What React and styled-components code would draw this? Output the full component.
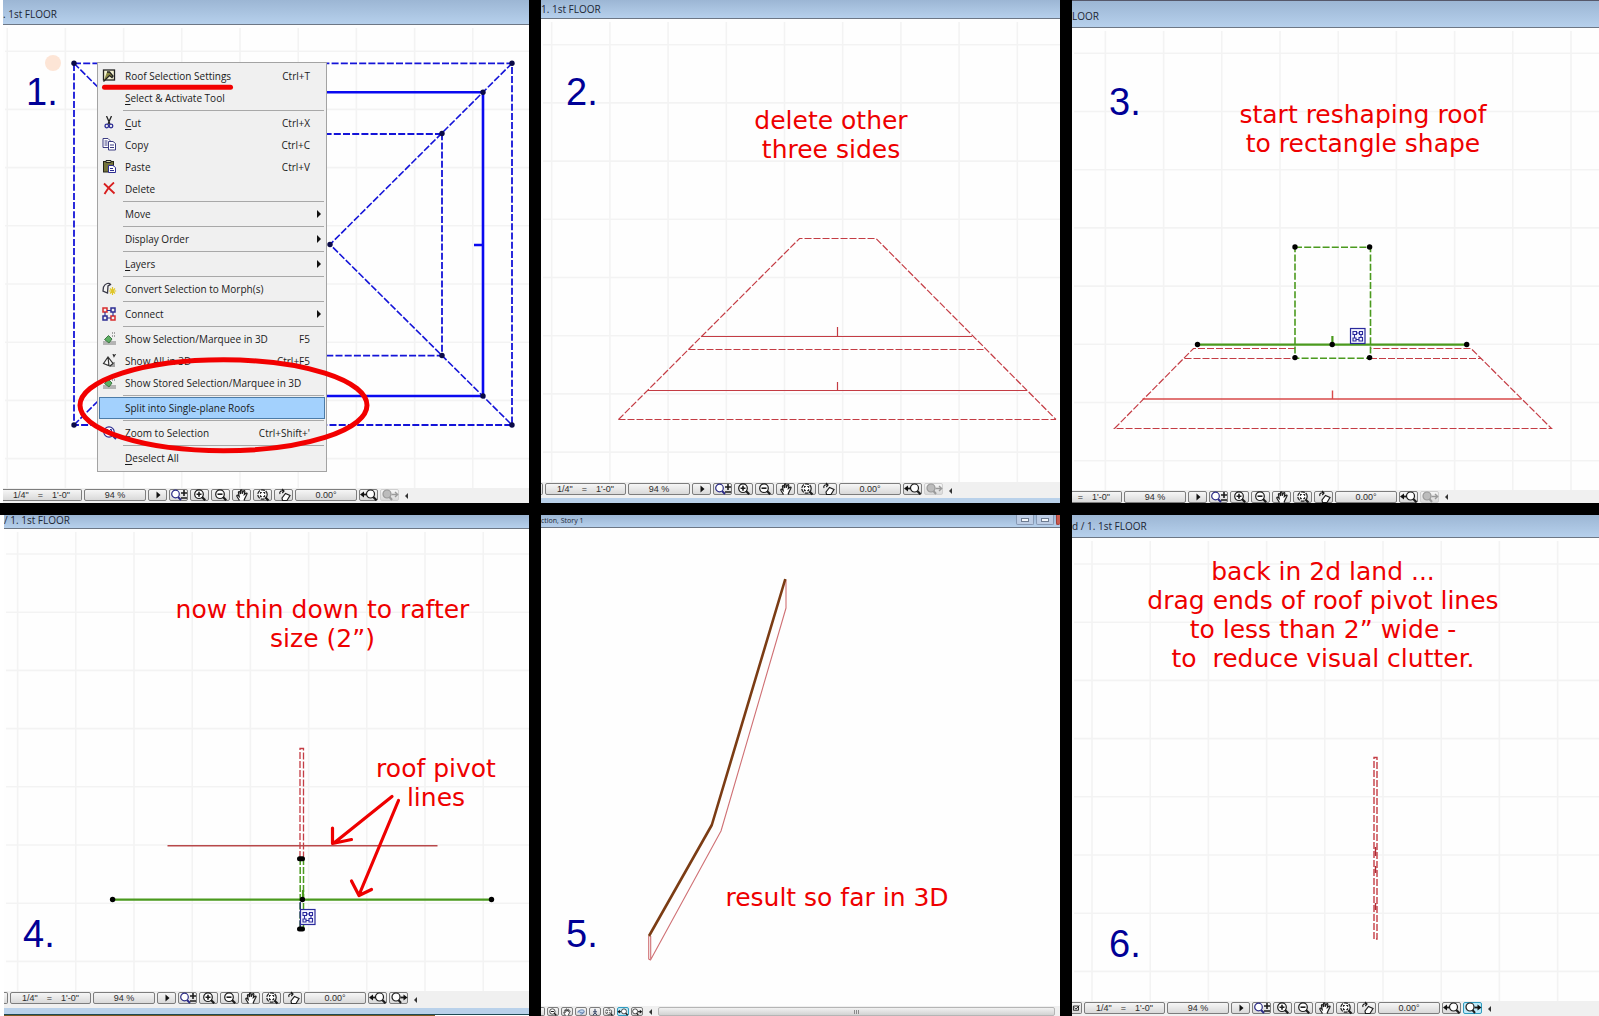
import React from 'react';
import styled, { createGlobalStyle } from 'styled-components';

const BLUE = "#1414d8";
const RED = "#c43c44";
const GREEN = "#4b9a1e";
const MARK = "#ee0000";

/* ---------- drawing helpers ---------- */

const Grid = ({ x, y, box }) => {
  const step = 58.2;
  const [left, top, width, height] = box;
  const cols = Array.from({ length: 9 }, (_, i) => x + i * step);
  const rows = Array.from({ length: 8 }, (_, i) => y + i * step);

  return (
    <g stroke="#f3f3f3" strokeWidth="1.6">
      {cols.map((cx) => <path key={`c-${cx}`} d={`M${cx} ${top + 3}V${top + height}`} />)}
      {rows.map((cy) => <path key={`r-${cy}`} d={`M${left + 2} ${cy}H${left + width}`} />)}
    </g>
  );
};

const Dots = ({ points, r = 2.7, fill = "#050510" }) => (
  <g fill={fill}>
    {points.map(([x, y]) => <circle key={`${x}-${y}`} cx={x} cy={y} r={r} />)}
  </g>
);

const PetIcon = ({ x, y }) => (
  <g transform={`translate(${x} ${y})`} fill="none" stroke="#2a2a9c">
    <rect x="0.5" y="0.5" width="14.5" height="15" fill="#f4f4ff" strokeWidth="1.2" />
    <path d="M3 3.5h3.5v3h-3.5zM9.5 3.5h3v3h-3zM3 10h3v3h-3zM9 9.5h3.500v3.500h-3.500zM6.500 5h3M4.500 6.500v3.500M11 6.500v3M6 11.500h3" strokeWidth="1.1" />
  </g>
);

/* ---------- toolbar icons ---------- */

const glyphs = {
  play: <path d="M6.500 2.500l4 3.500-4 3.500z" fill="#111" stroke="none" />,
  zoomBoth: (
    <g>
      <circle cx="4.500" cy="5" r="3.800" stroke="#2b2b86" fill="#fff" />
      <path d="M7 8l3 3" stroke="#2b2b86" strokeWidth="2" />
      <path d="M10 4h6M13 1v6M10 9h6" strokeWidth="1.600" />
    </g>
  ),
  zoomIn: (
    <g>
      <circle cx="7" cy="5.200" r="4.300" fill="#fff" />
      <path d="M10 8l3.200 3.200" strokeWidth="2.200" />
      <path d="M4.500 5.200h5M7 2.700v5" strokeWidth="1.600" />
    </g>
  ),
  zoomOut: (
    <g>
      <circle cx="7" cy="5.200" r="4.300" fill="#fff" />
      <path d="M10 8l3.200 3.200" strokeWidth="2.200" />
      <path d="M4.500 5.200h5" strokeWidth="1.600" />
    </g>
  ),
  hand: <path d="M5.500 11.500L3 7.500c-.8-1.200.6-1.800 1.300-.9L5.200 7.500 4.400 3.300c0-1 1.100-1 1.400-.2L6.500 5V1.500c.2-.9 1.300-.9 1.500 0L8.200 4.800 9.500 2c.5-.8 1.500-.3 1.300.6L10.300 5.500 12 4.200c.8-.5 1.400.3.9 1L11 9l-1 2.500" fill="#fff" />,
  fit: (
    <g>
      <circle cx="7.500" cy="5.500" r="4.700" fill="#fff" strokeDasharray="4 1" />
      <path d="M10.500 8.500l3 3" strokeWidth="2.200" />
      <path d="M5.500 4.800V3.500h1.300M8.300 3.500h1.300v1.300M9.600 6.300v1.300H8.300M6.800 7.600H5.500V6.300" strokeWidth="1.200" />
    </g>
  ),
  rotate: <path d="M4 5C3 2.500 5.500 1.200 7.500 2M6 0L8 2 6.300 4M6 9l3.500-4.500 4.500 2-3 5H6.500z" fill="#fff" />,
  prev: (
    <g>
      <path d="M1 5.500h4" strokeWidth="1.800" />
      <path d="M-1 5.500l4-3v6z" fill="#111" stroke="none" />
      <circle cx="9.500" cy="5" r="4" fill="#fff" />
      <path d="M12.300 8l3.200 3.200" strokeWidth="2.200" />
    </g>
  ),
  next: (
    <g>
      <circle cx="5" cy="5" r="4" fill="#fff" />
      <path d="M7.500 8l2.500 3" strokeWidth="2" />
      <path d="M9.500 5.500h4" strokeWidth="1.800" />
      <path d="M16.500 5.500l-4-3v6z" fill="#111" stroke="none" />
    </g>
  ),
  nextOff: (
    <g stroke="#9a9a9a">
      <circle cx="5" cy="5" r="4" fill="#bcbcbc" />
      <path d="M7.500 8l2.500 3" strokeWidth="2" />
      <path d="M9.500 5.500h6M13 3l2.700 2.500L13 8" strokeWidth="1.300" />
    </g>
  ),
  orbit: <path d="M3 7c0-4 8-6 10-3 1 3-3 6-6 5.500M4 4.500c3 3 6 3 8 2.500" stroke="#3c5f98" fill="#c7dcf2" />,
  walk: <path d="M8 1v2M8 4v3l-3 4M8 7l3 4M5 6l3-2 3 2" stroke="#26365a" strokeWidth="1.600" />,
  check: <path d="M2.500 2.500h9v7.500h-9zM4 5l3 3 6-6.500" strokeWidth="1.600" />
};

const icons = ["zoomBoth", "zoomIn", "zoomOut", "hand", "fit", "rotate"];

const ToolIcon = ({ name }) => (
  <Glyph viewBox="0 0 16 12" fill="none" stroke="#1c1c1c" strokeWidth="1.200" aria-hidden="true">
    {glyphs[name]}
  </Glyph>
);

const StatusBar = ({ height, lead, leadIcon, scaleWidth = 81, scale = ["1/4\"", "=", "1'-0\""], last = "nextOff" }) => (
  <Toolbar $height={height}>
    {lead && (
      <ToolButton $width={lead} $cut aria-label="Quick options">
        {leadIcon && <ToolIcon name={leadIcon} />}
      </ToolButton>
    )}
    <ScaleButton $width={scaleWidth} $cut={!lead}>
      {scale.map((part) => <span key={part}>{part}</span>)}
    </ScaleButton>
    <ToolButton $width={62}>94 %</ToolButton>
    <ToolButton aria-label="More"><ToolIcon name="play" /></ToolButton>
    {icons.map((name) => (
      <ToolButton key={name} aria-label={name}><ToolIcon name={name} /></ToolButton>
    ))}
    <ToolButton $width={62}>0.00°</ToolButton>
    <ToolButton aria-label="Previous zoom"><ToolIcon name="prev" /></ToolButton>
    <ToolButton aria-label="Next zoom" $faded={last === "nextOff"} $active={last === "nextActive"}>
      <ToolIcon name={last === "nextOff" ? "nextOff" : "next"} />
    </ToolButton>
    <Collapse />
  </Toolbar>
);

/* ---------- context menu ---------- */

const menuIcons = {
  settings: (
    <g>
      <rect x="1.500" y="1" width="11" height="10" fill="#f3f1d0" stroke="#222" strokeWidth="1.300" />
      <path d="M5 3l2.500 0 3.500 4-1 1.500L7.500 6.500l-6 6" stroke="#222" strokeWidth="1.300" fill="#8c8b45" />
    </g>
  ),
  cut: (
    <g>
      <path d="M4.500 0l3.500 8M9.500 0L6 8" stroke="#222" strokeWidth="1.300" />
      <circle cx="4.800" cy="10" r="1.800" stroke="#2e2e96" strokeWidth="1.300" />
      <circle cx="9" cy="10" r="1.800" stroke="#2e2e96" strokeWidth="1.300" />
    </g>
  ),
  copy: (
    <g stroke="#3c3c82" fill="#fff">
      <path d="M1 .5h5l2 2v7H1z" />
      <path d="M6.500 3.500h4.500l2.500 2v6.500h-7z" />
      <path d="M2.500 3h3M2.500 5h3M2.500 7h3M8 7h4M8 9.500h4" />
    </g>
  ),
  paste: (
    <g>
      <rect x="1.500" y="1.500" width="10" height="10.500" fill="#74733a" stroke="#26261a" />
      <path d="M4 2.500V.500h5v2z" fill="#d8d8b0" stroke="#222" />
      <path d="M6.500 5.500h4.500l2.500 2v5h-7z" fill="#fff" stroke="#2d2d92" />
      <path d="M8 8.500h3M8 10.500h4" stroke="#2d2d92" />
    </g>
  ),
  remove: <path d="M2 1.500l10.500 10M12 .500Q6 5 2.500 12" stroke="#d81e1e" strokeWidth="1.800" />,
  morph: (
    <g>
      <path d="M1 9l.5-4c2-4 5.500-4.500 7-2.500L6 4 5.500 11z" fill="#f4f4f4" stroke="#3a3a48" strokeWidth="1.300" />
      <path d="M10.500 5v8M6.800 9h7.400M8 6.500l5 5M13 6.500l-5 5" stroke="#dfc528" strokeWidth="1.200" />
    </g>
  ),
  connect: (
    <g strokeWidth="1.500">
      <path d="M1 1h4v4H1zM9 9h4v4H9z" stroke="#d82c2c" />
      <path d="M9 1h4v4H9zM1 9h4v4H1z" stroke="#2d2d92" />
      <path d="M5 3.500h4M3 5v4M11 5v4M5 11h4" stroke="#2d2d92" strokeWidth="1.100" />
    </g>
  ),
  marquee: (
    <g>
      <path d="M1 9h13v4H1z" fill="#b4b4b4" />
      <path d="M2.500 7.500l4-4 3.500 3.500-3 4z" fill="#5dae62" stroke="#3f7646" />
      <path d="M10 1h1M12 1h1M10 4h1M12 4h1" stroke="#555" strokeWidth="1.200" />
    </g>
  ),
  all: (
    <g>
      <path d="M8 8h5v5H8z" fill="#a4a4a4" />
      <path d="M1.500 9.500L6 3l5 6.500-3 2.500zM6 3l1 9M11 0l1 2.500L13.500 0" fill="#f5f5f5" stroke="#333" strokeWidth="1.200" />
    </g>
  ),
  zoom: (
    <g>
      <circle cx="7" cy="6" r="5.200" stroke="#2d2d92" strokeWidth="1.200" fill="#fff" />
      <path d="M11 10l3 3" stroke="#2d2d92" strokeWidth="2" />
      <path d="M4.500 5V3.500H6M8 3.500h1.500V5" stroke="#2d2d92" />
    </g>
  )
};

const menuItems = [
  { label: "Roof Selection Settings", keys: "Ctrl+T", icon: "settings" },
  { label: "Select & Activate Tool", underline: true, end: true },
  { label: "Cut", keys: "Ctrl+X", icon: "cut", underline: true },
  { label: "Copy", keys: "Ctrl+C", icon: "copy" },
  { label: "Paste", keys: "Ctrl+V", icon: "paste" },
  { label: "Delete", icon: "remove", end: true },
  { label: "Move", sub: true, end: true },
  { label: "Display Order", sub: true, end: true },
  { label: "Layers", sub: true, underline: true, end: true },
  { label: "Convert Selection to Morph(s)", icon: "morph", end: true },
  { label: "Connect", icon: "connect", sub: true, end: true },
  { label: "Show Selection/Marquee in 3D", keys: "F5", icon: "marquee" },
  { label: "Show All in 3D", keys: "Ctrl+F5", icon: "all" },
  { label: "Show Stored Selection/Marquee in 3D", icon: "marquee", end: true },
  { label: "Split into Single-plane Roofs", active: true, end: true },
  { label: "Zoom to Selection", keys: "Ctrl+Shift+'", icon: "zoom", end: true },
  { label: "Deselect All", underline: true }
];

const ContextMenu = () => (
  <Menu role="menu">
    {menuItems.map(({ label, keys, icon, sub, underline, end, active }) => (
      <React.Fragment key={label}>
        <MenuItem role="menuitem" $active={active}>
          <MenuIcon viewBox="0 0 15 14" fill="none">{menuIcons[icon]}</MenuIcon>
          <MenuLabel>{underline ? <><u>{label[0]}</u>{label.slice(1)}</> : label}</MenuLabel>
          <span>{keys}</span>
          <Arrow viewBox="0 0 5 8">{sub && <path d="M0 0l4 4-4 4z" fill="#111" />}</Arrow>
        </MenuItem>
        {end && <Separator />}
      </React.Fragment>
    ))}
  </Menu>
);

/* ---------- panels ---------- */

const HipRoof = () => {
  const box = [3, 25, 526, 463];
  return (
    <Panel $margin={3}>
      <TitleBar $height={25}>. 1st FLOOR</TitleBar>
      <Canvas>
        <Drawing viewBox={box.join(" ")}>
          <Grid x={7.2} y={51.2} box={box} />
          <circle cx="53" cy="63" r="8" fill="#fde5d6" />
          <g fill="none" stroke={BLUE} strokeWidth="1.800">
            <path d="M74 63.300H512V425H74z" strokeDasharray="7 2.200" />
            <path d="M442 134H150V355.700H442z" strokeDasharray="7 2.200" />
            <path d="M512 63.300L330 244.500 512 425M74 63.300L180 169M74 425L180 319" strokeDasharray="7 2" strokeWidth="1.600" />
            <path d="M110 92.300H483V396H110zM474 245H483" strokeWidth="2.600" stroke="#0a0af0" />
          </g>
          <Dots fill="#0a0a48" points={[[74, 63.3], [512, 63.3], [483, 92.3], [442, 133.5], [330, 244.5], [442, 355.5], [483, 396], [512, 425], [74, 425]]} />
        </Drawing>
        <StepNumber $left={23} $top={45}>1.</StepNumber>
        <ContextMenu />
        <Markup viewBox={box.join(" ")}>
          <g fill="none" stroke="#f20000" strokeWidth="5">
            <path d="M104.500 87.300H230.500" strokeLinecap="round" />
            <ellipse cx="223.500" cy="405.300" rx="143.500" ry="45.500" />
          </g>
        </Markup>
      </Canvas>
      <StatusBar height={15} scaleWidth={79} />
    </Panel>
  );
};

const DeleteSides = () => {
  const box = [541, 19, 519, 463];
  return (
    <Panel>
      <TitleBar $height={19}>1. 1st FLOOR</TitleBar>
      <Canvas>
        <Drawing viewBox={box.join(" ")}>
          <Grid x={551.7} y={44.7} box={box} />
          <g fill="none" stroke={RED} strokeWidth="1.200">
            <path d="M618.500 419.500L799.500 238.500H876L1056 419.500" strokeDasharray="7 2" />
            <path d="M618.500 419.500H1056M688.500 349.500H985.500" strokeDasharray="7 2" />
            <path d="M701.500 336.500H972M837.500 327V336M647 390.500H1027M837.500 382V390" />
          </g>
        </Drawing>
        <StepNumber $left={25} $top={51}>2.</StepNumber>
        <Note $left={190} $top={87} $width={200}>delete other<br />three sides</Note>
      </Canvas>
      <StatusBar height={16} lead={2} />
      <Edge $height={5} />
    </Panel>
  );
};

const Reshape = () => {
  const box = [1072, 28, 527, 462];
  return (
    <Panel>
      <TitleBar $height={28} $capped>LOOR</TitleBar>
      <Canvas>
        <Drawing viewBox={box.join(" ")}>
          <Grid x={1105.4} y={53.3} box={box} />
          <g fill="none" stroke={RED} strokeWidth="1.200">
            <path d="M1295 348.500H1193.500L1114.500 428.500H1551.500L1471 348.500H1370" strokeDasharray="7 2" />
            <path d="M1184.500 358.500H1295M1370 358.500H1481" strokeDasharray="7 2" />
            <path d="M1142.500 399H1521.500M1332.500 390.500V399" strokeWidth="1.400" stroke="#d84a4a" />
          </g>
          <g fill="none" stroke={GREEN}>
            <path d="M1295 247.200H1370.500V358.200H1295z" strokeWidth="1.600" strokeDasharray="7 2.200" />
            <path d="M1197.500 344.700H1466.500M1332.400 336V344" strokeWidth="2.200" />
          </g>
          <PetIcon x={1350} y={328} />
          <Dots fill="#000" points={[[1295, 247], [1369.6, 247], [1295, 357.6], [1369.6, 357.6], [1197.5, 344.5], [1332.2, 344.5], [1466.7, 344.5]]} />
        </Drawing>
        <StepNumber $left={37} $top={52}>3.</StepNumber>
        <Note $left={141} $top={72} $width={300}>start reshaping roof<br />to rectangle shape</Note>
      </Canvas>
      <StatusBar height={13} scaleWidth={50} scale={["=", "1'-0\""]} />
    </Panel>
  );
};

const ThinDown = () => {
  const box = [4, 529, 525, 462];
  return (
    <Panel $margin={4}>
      <TitleBar $height={14} $low>/ 1. 1st FLOOR</TitleBar>
      <Canvas>
        <Drawing viewBox={box.join(" ")}>
          <Grid x={17.6} y={554} box={box} />
          <g fill="none">
            <path d="M300 858V748.500H303.500V858" stroke={RED} strokeWidth="1.300" strokeDasharray="7 2" />
            <path d="M167.500 845.700H437.500" stroke="#b8484a" strokeWidth="1.400" />
            <path d="M300.200 858V929M303.500 858V929" stroke={GREEN} strokeWidth="1.500" strokeDasharray="7 2" />
            <path d="M300.200 902V927" stroke="#22306e" strokeWidth="1.400" strokeDasharray="7 2" />
            <path d="M112.500 899.700H491.500M303 890V899" stroke={GREEN} strokeWidth="2.200" />
          </g>
          <PetIcon x={300} y={909} />
          <Dots fill="#000" points={[[112.6, 899.5], [302.4, 899.5], [491.5, 899.5]]} />
          <path d="M299.500 858.700H302.500M299.500 929H302.500" stroke="#000" strokeWidth="5" strokeLinecap="round" />
          <g fill="none" stroke={MARK} strokeWidth="3.200" strokeLinecap="round" strokeLinejoin="round">
            <path d="M392 796.500L334 843M332.500 828V843.500L351.500 839.500" />
            <path d="M398.500 800.500L359 895M351.500 881L359 895.500 371.500 889.500" />
          </g>
        </Drawing>
        <Note $left={134} $top={66} $width={369}>now thin down to rafter<br />size (2”)</Note>
        <Note $left={332} $top={225} $width={200}>roof pivot<br />lines</Note>
        <StepNumber $left={19} $top={383}>4.</StepNumber>
      </Canvas>
      <StatusBar height={17} lead={4} last="next" />
      <Edge $height={6} />
      <Taskbar><TaskLine /></Taskbar>
    </Panel>
  );
};

const Result3D = () => (
  <Panel>
    <TitleBar $height={13} $small>
      ction, Story 1
      <WindowButtons>
        <WindowButton aria-label="Minimize"><i /></WindowButton>
        <WindowButton aria-label="Restore"><i /></WindowButton>
        <WindowButton aria-label="Close" $close />
      </WindowButtons>
    </TitleBar>
    <Canvas>
      <Drawing viewBox="541 528 519 478">
        <g fill="none" strokeLinejoin="round">
          <path d="M786 580V608L721 831 650.500 960 648.700 959V936M650.700 936V959" stroke="#cf7074" strokeWidth="1.100" />
          <path d="M785.300 579L711.800 825 649 936" stroke="#7b3c14" strokeWidth="2.600" />
        </g>
      </Drawing>
      <Note $left={146} $top={355} $width={300}>result so far in 3D</Note>
      <StepNumber $left={25} $top={384}>5.</StepNumber>
    </Canvas>
    <Toolbar $height={10}>
      <ToolButton $width={4} $cut $short aria-label="Zoom in" />
      {["zoomOut", "hand", "orbit", "walk", "fit"].map((name) => (
        <ToolButton key={name} $width={12} $short aria-label={name}><ToolIcon name={name} /></ToolButton>
      ))}
      <ToolButton $width={12} $short $active aria-label="Previous zoom"><ToolIcon name="prev" /></ToolButton>
      <ToolButton $width={12} $short aria-label="Next zoom"><ToolIcon name="next" /></ToolButton>
      <Collapse />
      <ScrollTrack><ScrollThumb /></ScrollTrack>
    </Toolbar>
  </Panel>
);

const BackTo2D = () => {
  const box = [1072, 538, 527, 463];
  return (
    <Panel>
      <TitleBar $height={23}>d / 1. 1st FLOOR</TitleBar>
      <Canvas>
        <Drawing viewBox={box.join(" ")}>
          <Grid x={1092} y={564} box={box} />
          <g fill="none" stroke={RED} strokeWidth="1.400">
            <path d="M1374 939V757.500H1377V939H1374" strokeDasharray="7 2" />
            <path d="M1375.500 847V856M1375.500 866V873M1375.500 903V910" stroke="#b02a34" />
          </g>
        </Drawing>
        <Note $left={41} $top={19} $width={420}>
          back in 2d land ...<br />
          drag ends of roof pivot lines<br />
          to less than 2” wide -<br />
          to&nbsp; reduce visual clutter.
        </Note>
        <StepNumber $left={37} $top={384}>6.</StepNumber>
      </Canvas>
      <StatusBar height={15} lead={10} leadIcon="check" last="nextActive" />
    </Panel>
  );
};

const App = () => {
  return (
    <>
      <GlobalStyle />
      <Sheet>
        <HipRoof />
        <DeleteSides />
        <Reshape />
        <ThinDown />
        <Result3D />
        <BackTo2D />
      </Sheet>
    </>
  );
};


const GlobalStyle = createGlobalStyle`
  * {
    box-sizing: border-box;
  }

  body {
    margin: 0;
    background: #000;
  }
`;

const Sheet = styled.main`
  display: grid;
  grid-template-columns: 529fr 519fr 527fr;
  grid-template-rows: 503fr 501fr;
  gap: 12px;
  min-height: 100vh;
  background: #000;
`;

const Panel = styled.section`
  display: flex;
  flex-direction: column;
  min-width: 0;
  overflow: hidden;
  background: #fefefe;
  border-left: ${({ $margin }) => $margin || 0}px solid #fff;
`;

const TitleBar = styled.header`
  display: flex;
  flex: none;
  align-items: ${({ $low }) => ($low ? "flex-end" : "center")};
  justify-content: space-between;
  height: ${({ $height }) => $height}px;
  padding-top: ${({ $height }) => ($height > 24 ? 3 : 0)}px;
  padding-bottom: ${({ $low }) => ($low ? 3 : 0)}px;
  overflow: hidden;
  background: linear-gradient(#9cb6d4, #b6d0ec);
  border-top: ${({ $capped }) => ($capped ? "1px solid #56586a" : "none")};
  border-bottom: 1px solid #6d7785;
  color: #1c2634;
  font-family: "Open Sans", "Noto Sans", sans-serif;
  font-size: ${({ $small }) => ($small ? 7 : 10)}px;
  line-height: ${({ $low }) => ($low ? 10 : 14)}px;
  white-space: nowrap;
`;

const WindowButtons = styled.div`
  display: flex;
  align-self: flex-start;
  gap: 2px;
`;

const WindowButton = styled.button`
  display: flex;
  align-items: center;
  justify-content: center;
  width: ${({ $close }) => ($close ? 4 : 18)}px;
  height: 10px;
  padding: 0;
  border: 1px solid ${({ $close }) => ($close ? "#a23c34" : "#8799b4")};
  border-top: none;
  border-right-width: ${({ $close }) => ($close ? 0 : 1)}px;
  border-radius: 0 0 2px 2px;
  background: ${({ $close }) => ($close ? "#c95a4e" : "#bccce4")};

  i {
    width: 8px;
    height: 4px;
    border: 1px solid #6d7c92;
    background: #f4f7fb;
  }
`;

const Canvas = styled.div`
  position: relative;
  flex: 1;
  min-height: 0;
  overflow: hidden;
`;

const Drawing = styled.svg.attrs({ preserveAspectRatio: "xMinYMin meet" })`
  position: absolute;
  inset: 0;
  width: 100%;
  height: 100%;
`;

const Markup = styled(Drawing)`
  pointer-events: none;
`;

const StepNumber = styled.strong`
  position: absolute;
  left: ${({ $left }) => $left}px;
  top: ${({ $top }) => $top}px;
  color: #000096;
  font-family: "Liberation Sans", Arial, sans-serif;
  font-size: 38px;
  font-weight: 400;
  line-height: 44px;
`;

const Note = styled.p`
  position: absolute;
  left: ${({ $left }) => $left}px;
  top: ${({ $top }) => $top}px;
  width: ${({ $width }) => $width}px;
  margin: 0;
  color: ${MARK};
  font-family: "DejaVu Sans", Verdana, sans-serif;
  font-size: 25px;
  line-height: 29px;
  text-align: center;
  white-space: nowrap;
`;

const Menu = styled.div`
  position: absolute;
  left: 94px;
  top: 37px;
  width: 230px;
  padding: 2px 1px;
  border: 1px solid #a3a3a3;
  background: #f0f0f0;
  color: #1a1a1a;
  font-family: "Open Sans", "Noto Sans", sans-serif;
  font-size: 10px;
`;

const MenuItem = styled.button`
  display: flex;
  align-items: center;
  width: 100%;
  height: 22px;
  padding: 0 2px;
  border: 1px solid ${({ $active }) => ($active ? "#4c7ca8" : "transparent")};
  background: ${({ $active }) => ($active ? "#a3d1fd" : "none")};
  color: inherit;
  font: inherit;
  text-align: left;
  white-space: nowrap;
`;

const MenuLabel = styled.span`
  flex: 1;

  u {
    text-underline-offset: 2px;
  }
`;

const MenuIcon = styled.svg`
  flex: none;
  width: 15px;
  height: 14px;
  margin-right: 8px;
`;

const Arrow = styled.svg`
  flex: none;
  width: 5px;
  height: 8px;
  margin-left: 7px;
`;

const Separator = styled.hr`
  height: 1px;
  margin: 1px 1px 1px 24px;
  border: none;
  background: #a8a8a8;
`;

const Toolbar = styled.div`
  display: flex;
  flex: none;
  align-items: flex-start;
  gap: 2px;
  height: ${({ $height }) => $height}px;
  padding-top: 1px;
  overflow: hidden;
  background: #f0f0f0;
`;

const ToolButton = styled.button`
  display: flex;
  flex: none;
  align-items: center;
  justify-content: center;
  width: ${({ $width }) => $width || 19}px;
  height: ${({ $short }) => ($short ? 9 : 12)}px;
  padding: 0;
  border: 1px solid ${({ $faded, $active }) => ($active ? "#2f9cc0" : $faded ? "#cfcfcf" : "#7d7d7d")};
  border-left-width: ${({ $cut }) => ($cut ? 0 : 1)}px;
  border-radius: ${({ $cut }) => ($cut ? "0 2px 2px 0" : "2px")};
  background: ${({ $active }) => ($active ? "#bfe9f7" : "linear-gradient(#f6f6f6, #d9d9d9)")};
  color: #2c2c2c;
  font-family: "Liberation Sans", Arial, sans-serif;
  font-size: 9px;
  line-height: 10px;
`;

const ScaleButton = styled(ToolButton)`
  justify-content: flex-end;
  gap: 9px;
  padding-right: 11px;
  white-space: pre;
`;

const Glyph = styled.svg`
  flex: none;
  width: 16px;
  max-width: 100%;
  height: 12px;
  overflow: visible;
`;

const Collapse = styled.i`
  align-self: center;
  flex: none;
  margin: 0 4px;
  border: 3px solid transparent;
  border-left: none;
  border-right: 3px solid #333;
`;

const ScrollTrack = styled.div`
  display: flex;
  flex: 1;
  justify-content: center;
  align-items: center;
  height: 9px;
  margin-right: 5px;
  border: 1px solid #b5b5b5;
  border-radius: 2px;
  background: linear-gradient(#f2f2f2, #d2d2d2);
`;

const ScrollThumb = styled.i`
  width: 6px;
  height: 4px;
  background: repeating-linear-gradient(90deg, #8a8a8a 0 1px, transparent 1px 2px);
`;

const Edge = styled.div`
  flex: none;
  height: ${({ $height }) => $height}px;
  background: #b9d1ea;
`;

const Taskbar = styled.footer`
  flex: none;
  height: 2px;
  border-top: 1px solid #1f4a55;
  background: #fff;
`;

const TaskLine = styled.div`
  width: 82%;
  height: 1px;
  background: #7d5a20;
`;


export default App;
